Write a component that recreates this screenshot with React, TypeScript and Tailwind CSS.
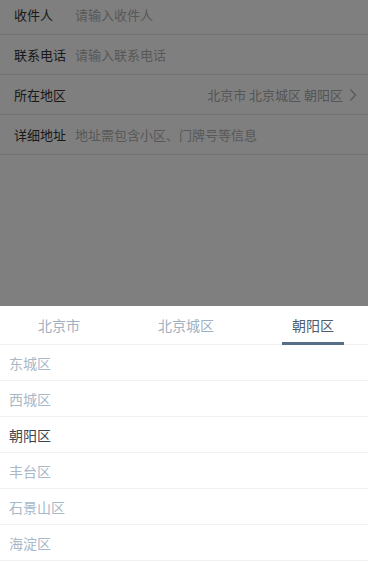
import React from "react";

const font = { fontFamily: '"Noto Sans CJK SC", "Noto Sans", sans-serif' };

export default function App() {
  const rows = [
    { label: "收件人", placeholder: "请输入收件人" },
    { label: "联系电话", placeholder: "请输入联系电话" },
  ];
  const districts = ["东城区", "西城区", "朝阳区", "丰台区", "石景山区", "海淀区"];
  return (
    <div className="relative w-[368px] h-[562px] overflow-hidden bg-white text-[14px]" style={font}>
      <div className="-mt-[5px] flex flex-col text-[13px]">
        {rows.map((r) => (
          <div key={r.label} className="h-10 flex items-center border-b border-[#e6e6e6] pl-[14px] pt-[1px]">
            <span className="w-[61px] text-[#333]">{r.label}</span>
            <span className="text-[#b0b0b0]">{r.placeholder}</span>
          </div>
        ))}
        <div className="h-10 flex items-center border-b border-[#e6e6e6] pl-[14px] pr-[10px] pt-[1px]">
          <span className="w-[61px] text-[#333]">所在地区</span>
          <span className="flex-1 text-right text-[#aaa]">北京市 北京城区 朝阳区</span>
          <svg width="10" height="14" viewBox="0 0 10 14" className="ml-[5px]">
            <path d="M2.5 1.5 L7.5 7 L2.5 12.5" fill="none" stroke="#b0b0b0" strokeWidth="1.2" />
          </svg>
        </div>
        <div className="h-10 flex items-center border-b border-[#e6e6e6] pl-[14px] pt-[1px]">
          <span className="w-[61px] text-[#333]">详细地址</span>
          <span className="text-[#b0b0b0]">地址需包含小区、门牌号等信息</span>
        </div>
      </div>

      <div className="absolute inset-0 bg-black/50" />

      <div className="absolute left-0 right-0 bottom-0 h-[256px] bg-white flex flex-col">
        <div className="h-[39px] flex items-stretch border-b border-[#f0f0f0] pl-[28px] gap-[58px]">
          <div className="w-[62px] flex items-center justify-center text-[#9fb0c2]">北京市</div>
          <div className="w-[76px] flex items-center justify-center text-[#9fb0c2]">北京城区</div>
          <div className="relative w-[62px] flex items-center justify-center text-[#4d5c6d]">
            朝阳区
            <div className="absolute left-0 right-0 -bottom-[1px] h-[3px] bg-[#566e86]" />
          </div>
        </div>
        <div className="flex flex-col">
          {districts.map((d) => (
            <div
              key={d}
              className={`h-9 flex items-center border-b border-[#f2f2f2] pl-[9px] pt-[1px] ${
                d === "朝阳区" ? "text-[#3a4450]" : "text-[#a8b8c9]"
              }`}
            >
              {d}
            </div>
          ))}
        </div>
      </div>
    </div>
  );
}
